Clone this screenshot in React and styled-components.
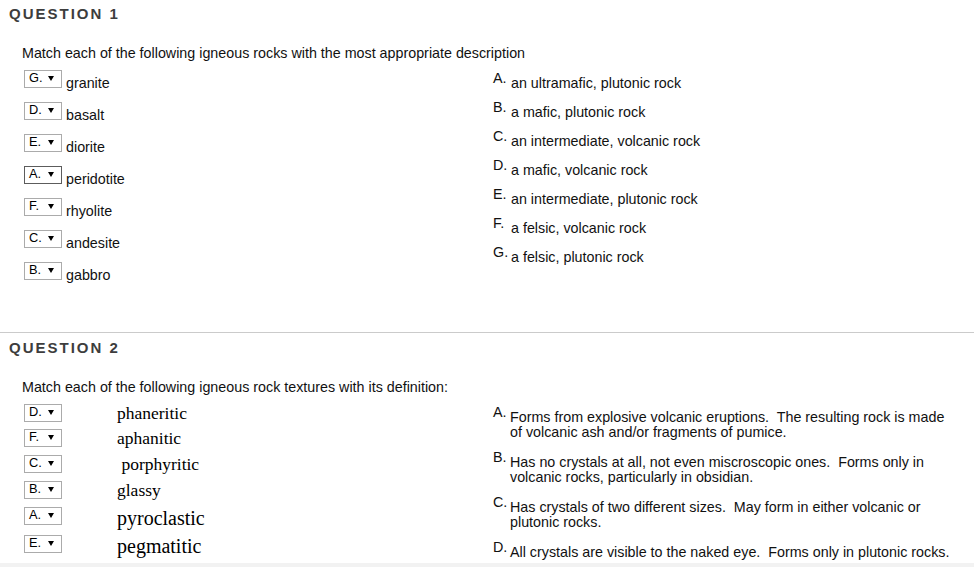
import React from "react";
import styled, { createGlobalStyle } from "styled-components";

const GlobalStyle = createGlobalStyle`
  html, body { margin: 0; padding: 0; background: #fff; }
  body { font-family: "Liberation Sans", Arial, sans-serif; color: #111; }
`;

const Page = styled.div`
  width: 974px;
  height: 567px;
  overflow: hidden;
  display: flex;
  flex-direction: column;
`;

const Section = styled.section`
  padding: ${(p) => p.$pt}px 0 ${(p) => p.$pb}px;
  border-bottom: ${(p) => (p.$divider ? "1px solid #cbcbcb" : "none")};
`;

const Heading = styled.h2`
  margin: 0 0 0 9px;
  font: bold 15px/18px "Liberation Sans", Arial, sans-serif;
  letter-spacing: 2px;
  color: #3d3d3d;
`;

const Prompt = styled.p`
  margin: 22px 0 9px 22px;
  font-size: 14.3px;
  line-height: 16px;
  color: #111;
`;

const Body = styled.div`
  display: grid;
  grid-template-columns: 469px 1fr;
  padding-left: 24px;
`;

const Column = styled.div`
  display: flex;
  flex-direction: column;
  gap: ${(p) => p.$gap || 0}px;
  padding-top: ${(p) => p.$pt || 0}px;
`;

const MatchRow = styled.div`
  display: flex;
  align-items: flex-start;
  height: ${(p) => p.$h}px;
`;

const SelectBox = styled.div`
  box-sizing: border-box;
  width: 38px;
  height: 18px;
  flex-shrink: 0;
  border: 1px solid ${(p) => (p.$focused ? "#5c5c5c" : "#ababab")};
  background: #fff;
  display: flex;
  align-items: flex-start;
  padding-left: 4px;
  font: 12.8px/13px "Liberation Sans", Arial, sans-serif;
  color: #000;
`;

const Arrow = styled.svg`
  margin-left: auto;
  margin-right: 7px;
  margin-top: 4.5px;
  display: block;
`;

const Select = ({ value, focused }) => (
  <SelectBox $focused={focused}>
    <span>{value}.</span>
    <Arrow width="6" height="5" viewBox="0 0 6 5">
      <polygon points="0,0 6,0 3,5" fill="#000" />
    </Arrow>
  </SelectBox>
);

const RockLabel = styled.span`
  margin: 4.5px 0 0 4px;
  font-size: 14.3px;
  line-height: 16px;
  color: #111;
`;

const TextureLabel = styled.span`
  margin: ${(p) => p.$mt}px 0 0 55px;
  font-family: "Liberation Serif", "Times New Roman", serif;
  font-size: ${(p) => p.$size}px;
  line-height: 20px;
  white-space: pre;
  color: #000;
`;

const Answer = styled.div`
  display: flex;
  align-items: flex-start;
  font-size: 14.3px;
  line-height: 15px;
  color: #111;
`;

const AnswerLetter = styled.span`
  width: ${(p) => p.$w}px;
  flex-shrink: 0;
`;

const AnswerText = styled.span`
  padding-top: 5px;
  width: 448px;
`;

const NextBand = styled.div`
  flex: 1;
  background: #f2f2f2;
`;

const q1Items = [
  ["G", "granite"],
  ["D", "basalt"],
  ["E", "diorite"],
  ["A", "peridotite", true],
  ["F", "rhyolite"],
  ["C", "andesite"],
  ["B", "gabbro"],
];

const q1Answers = [
  ["A", "an ultramafic, plutonic rock"],
  ["B", "a mafic, plutonic rock"],
  ["C", "an intermediate, volcanic rock"],
  ["D", "a mafic, volcanic rock"],
  ["E", "an intermediate, plutonic rock"],
  ["F", "a felsic, volcanic rock"],
  ["G", "a felsic, plutonic rock"],
];

const q2Items = [
  { v: "D", label: "phaneritic", size: 17.5, mt: -1, h: 25 },
  { v: "F", label: "aphanitic", size: 17.5, mt: -1, h: 26 },
  { v: "C", label: " porphyritic", size: 17.5, mt: -1, h: 26 },
  { v: "B", label: "glassy", size: 17.5, mt: -1, h: 26 },
  { v: "A", label: "pyroclastic", size: 20, mt: 1, h: 28 },
  { v: "E", label: "pegmatitic", size: 20, mt: 1, h: 26 },
];

const q2Answers = [
  ["A", "Forms from explosive volcanic eruptions.\u00a0 The resulting rock is made of volcanic ash and/or fragments of pumice."],
  ["B", "Has no crystals at all, not even miscroscopic ones.\u00a0 Forms only in volcanic rocks, particularly in obsidian."],
  ["C", "Has crystals of two different sizes.\u00a0 May form in either volcanic or plutonic rocks."],
  ["D", "All crystals are visible to the naked eye.\u00a0 Forms only in plutonic rocks."],
];

export default function App() {
  return (
    <>
      <GlobalStyle />
      <Page>
        <Section $pt={5} $pb={38} $divider>
          <Heading>QUESTION 1</Heading>
          <Prompt>Match each of the following igneous rocks with the most appropriate description</Prompt>
          <Body>
            <Column>
              {q1Items.map(([v, label, focused]) => (
                <MatchRow key={label} $h={32}>
                  <Select value={v} focused={focused} />
                  <RockLabel>{label}</RockLabel>
                </MatchRow>
              ))}
            </Column>
            <Column $gap={9} $pt={1}>
              {q1Answers.map(([l, t]) => (
                <Answer key={l}>
                  <AnswerLetter $w={18}>{l}.</AnswerLetter>
                  <AnswerText>{t}</AnswerText>
                </Answer>
              ))}
            </Column>
          </Body>
        </Section>
        <Section $pt={6} $pb={2}>
          <Heading>QUESTION 2</Heading>
          <Prompt>Match each of the following igneous rock textures with its definition:</Prompt>
          <Body>
            <Column>
              {q2Items.map((it) => (
                <MatchRow key={it.label} $h={it.h}>
                  <Select value={it.v} />
                  <TextureLabel $size={it.size} $mt={it.mt}>{it.label}</TextureLabel>
                </MatchRow>
              ))}
            </Column>
            <Column $gap={10} $pt={1}>
              {q2Answers.map(([l, t]) => (
                <Answer key={l}>
                  <AnswerLetter $w={17}>{l}.</AnswerLetter>
                  <AnswerText>{t}</AnswerText>
                </Answer>
              ))}
            </Column>
          </Body>
        </Section>
        <NextBand />
      </Page>
    </>
  );
}
